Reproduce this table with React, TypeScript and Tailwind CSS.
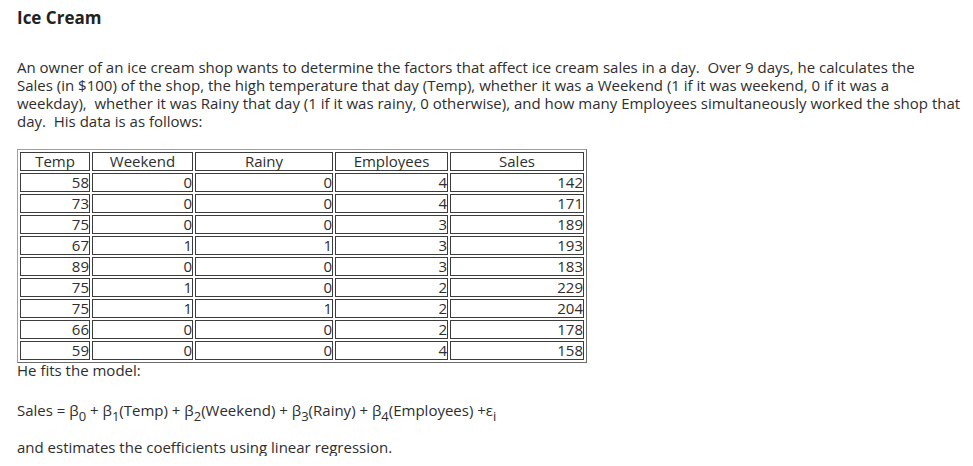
const rows: number[][] = [
  [58, 0, 0, 4, 142],
  [73, 0, 0, 4, 171],
  [75, 0, 0, 3, 189],
  [67, 1, 1, 3, 193],
  [89, 0, 0, 3, 183],
  [75, 1, 0, 2, 229],
  [75, 1, 1, 2, 204],
  [66, 0, 0, 2, 178],
  [59, 0, 0, 4, 158],
];

const headers = ['Temp', 'Weekend', 'Rainy', 'Employees', 'Sales'];
const widths = ['w-[70px]', 'w-[101px]', 'w-[138px]', 'w-[113px]', 'w-[134px]'];

const intro = [
  'An owner of an ice cream shop wants to determine the factors that affect ice cream sales in a day.\u00a0 Over 9 days, he calculates the',
  'Sales (in $100) of the shop, the high temperature that day (Temp), whether it was a Weekend (1 if it was weekend, 0 if it was a',
  'weekday),\u00a0 whether it was Rainy that day (1 if it was rainy, 0 otherwise), and how many Employees simultaneously worked the shop that',
  'day.\u00a0 His data is as follows:',
];

function Sub({ children }: { children: React.ReactNode }) {
  return <span className="text-[13px] relative top-[5px] leading-none">{children}</span>;
}

export default function App() {
  return (
    <div className="pl-[17px] pt-[7px] text-[15px] leading-[18px] text-[#2e2e2e] font-['Open_Sans','Liberation_Sans',sans-serif]">
      <h1 className="text-[17px] font-bold leading-[22px] text-[#222]">Ice Cream</h1>

      <div className="mt-[29px]">
        {intro.map((line, i) => (
          <div key={i} className="whitespace-nowrap w-max">{line}</div>
        ))}
      </div>

      <table className="mt-[19px] border-separate border-spacing-[2px] border border-t-[#a0a0a0] border-l-[#a0a0a0] border-r-[#6b6b6b] border-b-[#6b6b6b]">
        <thead>
          <tr>
            {headers.map((h, i) => (
              <td key={h} className={`${widths[i]} h-[19px] p-0 text-center leading-[17px] border border-[#3c3c3c] font-normal`}>
                {h}
              </td>
            ))}
          </tr>
        </thead>
        <tbody>
          {rows.map((r, ri) => (
            <tr key={ri}>
              {r.map((v, ci) => (
                <td key={ci} className="h-[19px] p-0 text-right leading-[17px] border border-[#3c3c3c]">
                  {v}
                </td>
              ))}
            </tr>
          ))}
        </tbody>
      </table>

      <p className="-mt-[2px]">He fits the model:</p>

      <p className="mt-[22px] h-[18px] whitespace-nowrap">
        Sales = β<Sub>0</Sub> + β<Sub>1</Sub>(Temp) + β<Sub>2</Sub>(Weekend) + β<Sub>3</Sub>(Rainy) + β<Sub>4</Sub>(Employees) +ε<Sub>i</Sub>
      </p>

      <p className="mt-[19px]">and estimates the coefficients using linear regression.</p>
    </div>
  );
}
